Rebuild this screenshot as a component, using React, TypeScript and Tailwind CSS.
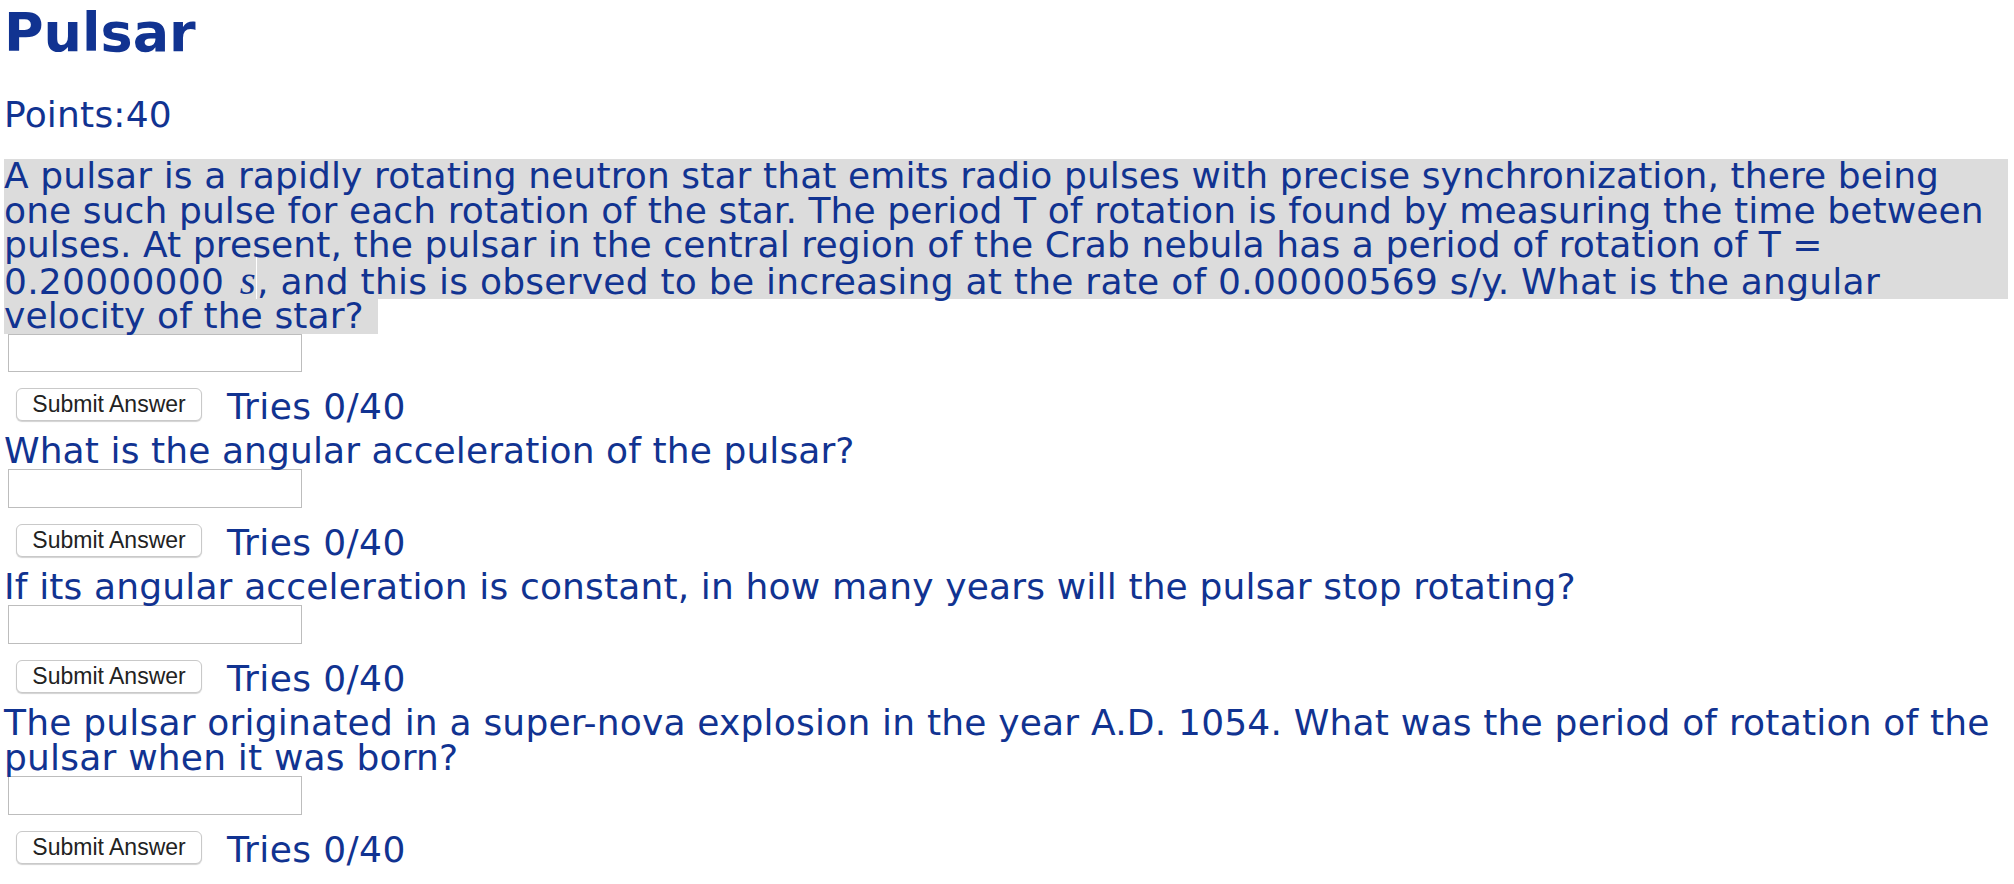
import React from "react";

const font = "font-['DejaVu_Sans',Verdana,sans-serif]";

function AnswerRow({ first }: { first?: boolean }) {
  return (
    <>
      <input
        type="text"
        aria-label="answer"
        className={
          (first ? "mt-0 h-[38px] " : "mt-[1px] h-[39px] ") +
          "block ml-[4px] w-[294px] border border-[#bdbdbd] bg-white outline-none"
        }
      />
      <div className="mt-[16px] mb-[9px] flex items-start">
        <button
          type="button"
          className="ml-[12px] w-[186px] h-[33px] rounded-[6px] border border-[#c9c9c9] bg-white shadow-[0_1px_1px_rgba(0,0,0,0.18)] font-['Liberation_Sans',Arial,sans-serif] text-[23px] leading-none text-[#222222]"
        >
          Submit Answer
        </button>
        <span className="ml-[25px] mt-[1px] text-[36px] leading-[35px] tracking-[0.4px] whitespace-nowrap">
          Tries 0/40
        </span>
      </div>
    </>
  );
}

export default function App() {
  return (
    <div
      className={
        font +
        " w-[2014px] min-h-[884px] bg-white pl-[4px] pr-[6px] text-[#113391]"
      }
    >
      <h1 className="pt-[3px] text-[54px] leading-[60px] font-bold">Pulsar</h1>
      <div className="mt-[34px] text-[36px] leading-[35px] tracking-[0.2px]">Points:40</div>

      <div className="mt-[27px] text-[36px] leading-[34.6px] tracking-[0.1px] whitespace-nowrap">
        <div className="bg-[#dcdcdc]">
          A pulsar is a rapidly rotating neutron star that emits radio pulses with precise synchronization, there being
        </div>
        <div className="bg-[#dcdcdc]">
          one such pulse for each rotation of the star. The period T of rotation is found by measuring the time between
        </div>
        <div className="bg-[#dcdcdc]">
          pulses. At present, the pulsar in the central region of the Crab nebula has a period of rotation of T =
        </div>
        <div className="bg-[#dcdcdc] tracking-[0.25px]">
          0.20000000{" "}
          <span className="ml-[4px] font-['Liberation_Serif',serif] italic text-[41px] border-r border-b border-white">
            s
          </span>
          , and this is observed to be increasing at the rate of 0.00000569 s/y. What is the angular
        </div>
        <div>
          <span className="inline-block bg-[#dcdcdc] pr-[14px]">velocity of the star?</span>
        </div>
      </div>
      <AnswerRow first />

      <div className="text-[36px] leading-[35px] tracking-[0.1px] whitespace-nowrap">
        What is the angular acceleration of the pulsar?
      </div>
      <AnswerRow />

      <div className="text-[36px] leading-[35px] tracking-[0.15px] whitespace-nowrap">
        If its angular acceleration is constant, in how many years will the pulsar stop rotating?
      </div>
      <AnswerRow />

      <div className="text-[36px] leading-[35px] tracking-[0.2px] whitespace-nowrap">
        The pulsar originated in a super-nova explosion in the year A.D. 1054. What was the period of rotation of the
        <br />
        pulsar when it was born?
      </div>
      <AnswerRow />
    </div>
  );
}
